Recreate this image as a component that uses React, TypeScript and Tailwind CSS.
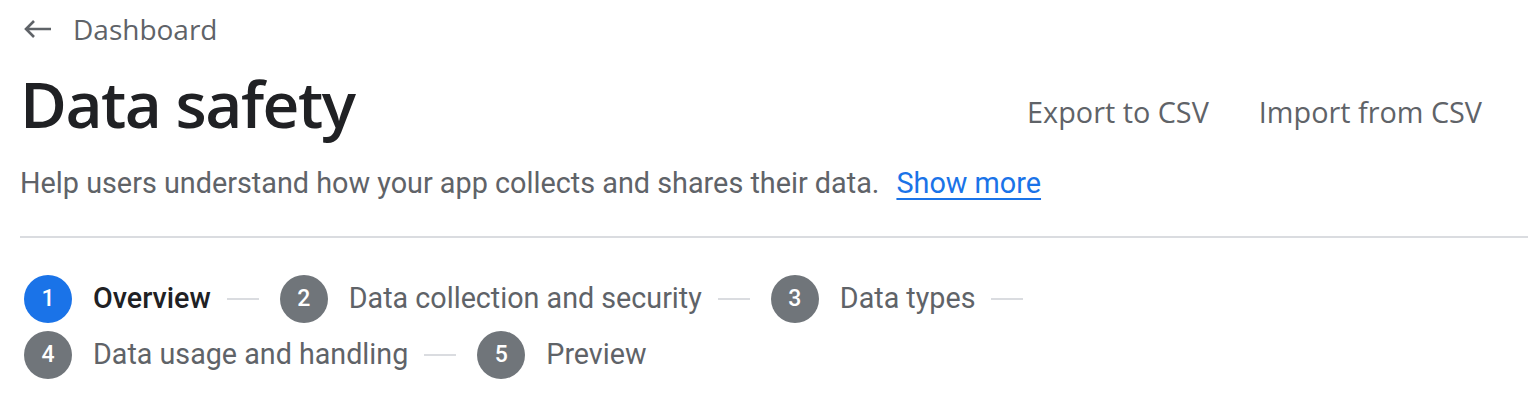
import React from 'react';

const steps = [
  [
    { n: 1, label: 'Overview', active: true, line: true },
    { n: 2, label: 'Data collection and security', line: true },
    { n: 3, label: 'Data types', line: true },
  ],
  [
    { n: 4, label: 'Data usage and handling', line: true },
    { n: 5, label: 'Preview', line: false },
  ],
];

const Step: React.FC<{ n: number; label: string; active?: boolean; line?: boolean }> = ({ n, label, active, line }) => (
  <div className="flex items-center">
    <div
      className={`w-[48px] h-[48px] rounded-full flex items-center justify-center text-white text-[23px] font-medium ${
        active ? 'bg-[#1a73e8]' : 'bg-[#70757a]'
      }`}
    >
      {n}
    </div>
    <span className={`ml-[21px] text-[28.7px] ${active ? 'font-medium text-[#202124]' : 'text-[#5f6368]'}`}>{label}</span>
    {line && <div className="ml-[16px] mr-[21px] w-[32px] h-[2px] bg-[#dadce0]" />}
  </div>
);

export default function App() {
  return (
    <div className="w-[1528px] h-[398px] bg-white overflow-hidden pl-[20px]" style={{ fontFamily: 'Roboto, sans-serif' }}>
      <div className="flex items-center h-[58px] text-[#5f6368]" style={{ fontFamily: '"Open Sans", sans-serif' }}>
        <svg width="28" height="20" viewBox="0 0 28 20" className="ml-[4px]" fill="none" stroke="#5f6368" strokeWidth="2.6">
          <path d="M2 10h25M10 2l-8 8 8 8" />
        </svg>
        <span className="ml-[21px] text-[28px]">Dashboard</span>
      </div>
      <div className="flex items-center justify-between h-[100px] pr-[46px]">
        <h1
          className="text-[64px] leading-[80px] font-semibold text-[#202124] tracking-[-1.5px] mt-[-8px]"
          style={{ fontFamily: '"Open Sans", sans-serif' }}
        >
          Data safety
        </h1>
        <div className="flex items-center gap-[50px] text-[28.8px] text-[#5f6368] mt-[8px]" style={{ fontFamily: '"Open Sans", sans-serif' }}>
          <span>Export to CSV</span>
          <span>Import from CSV</span>
        </div>
      </div>
      <div className="text-[28.8px] text-[#5f6368] h-[52px] flex items-center">
        Help users understand how your app collects and shares their data.
        <a className="ml-[17px] text-[#1a73e8] underline underline-offset-[5px]">Show more</a>
      </div>
      <div className="mt-[26px] h-[2px] bg-[#dadce0]" />
      <div className="pt-[37px] flex flex-col gap-[8px] pl-[4px]">
        {steps.map((row, i) => (
          <div key={i} className="flex items-center">
            {row.map((s) => (
              <Step key={s.n} {...s} />
            ))}
          </div>
        ))}
      </div>
    </div>
  );
}
